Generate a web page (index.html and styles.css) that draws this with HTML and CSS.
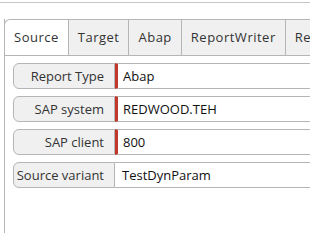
FILE: index.html
```html
<!DOCTYPE html>
<html>
<head>
<meta charset="utf-8">
<link rel="stylesheet" href="styles.css">
</head>
<body>
<div class="topline"></div>
<div class="panel">
  <div class="tabs">
    <div class="tab active">Source</div>
    <div class="tab">Target</div>
    <div class="tab">Abap</div>
    <div class="tab">ReportWriter</div>
    <div class="tab">Report</div>
  </div>
  <div class="fields">
    <div class="row">
      <div class="label">Report Type</div>
      <div class="value required">Abap</div>
    </div>
    <div class="row">
      <div class="label">SAP system</div>
      <div class="value required">REDWOOD.TEH</div>
    </div>
    <div class="row">
      <div class="label">SAP client</div>
      <div class="value required">800</div>
    </div>
    <div class="row">
      <div class="label">Source variant</div>
      <div class="value">TestDynParam</div>
    </div>
  </div>
</div>
</body>
</html>
```

FILE: styles.css
```css
html, body {
  margin: 0;
  padding: 0;
  background: #fff;
  overflow: hidden;
}
body {
  font-family: "Open Sans", "DejaVu Sans", sans-serif;
  font-size: 13px;
  color: #333;
  width: 310px;
  height: 237px;
}
.topline {
  height: 2px;
  border-bottom: 1px solid #c8c8c8;
}
.panel {
  margin: 16px 0 0 4px;
  width: 306px;
  height: 214px;
  border-left: 1px solid #b5b5b5;
  overflow: hidden;
}
.tabs {
  display: flex;
  border-bottom: 1px solid #b5b5b5;
  height: 36px;
  margin-left: -1px;
}
.tab {
  flex: none;
  padding: 0 9px;
  line-height: 35px;
  background: #f0f0f0;
  border-top: 1px solid #b5b5b5;
  border-right: 1px solid #b5b5b5;
  letter-spacing: 0.5px;
  white-space: nowrap;
}
.tab.active {
  background: #fff;
  border-left: 1px solid #b5b5b5;
  border-top-left-radius: 6px;
}
.fields {
  display: flex;
  flex-direction: column;
  gap: 7px;
  padding: 7px 0 0 8px;
}
.row {
  display: flex;
  height: 26px;
}
.label {
  flex: none;
  width: 90px;
  padding-right: 10px;
  box-sizing: content-box;
  text-align: right;
  line-height: 24px;
  background: #f0f0f0;
  border: 1px solid #b5b5b5;
  border-radius: 6px 0 0 6px;
}
.value {
  flex: 1;
  line-height: 24px;
  border-top: 1px solid #b5b5b5;
  border-bottom: 1px solid #b5b5b5;
  padding-left: 7px;
  color: #111;
}
.value.required {
  border-left: 3px solid #c0392b;
  padding-left: 5px;
}
```
